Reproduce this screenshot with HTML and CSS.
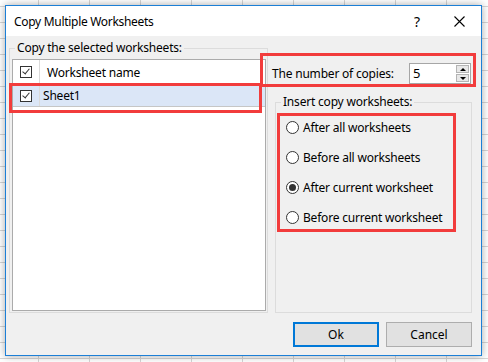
FILE: index.html
```html
<!DOCTYPE html>
<html lang="en">
<head>
  <meta charset="UTF-8" />
  <title>Copy Multiple Worksheets</title>
  <link rel="stylesheet" href="styles.css">
</head>
<body>

  <!-- Dialog -->
  <div class="dialog">
    <div class="titlebar">
      <span class="title">Copy Multiple Worksheets</span>
      <span class="help">?</span>
      <span class="close">
        <svg width="11" height="11" viewBox="0 0 11 11"><path d="M0.5 0.5L10.5 10.5M10.5 0.5L0.5 10.5" stroke="#000" stroke-width="1.1" fill="none"/></svg>
      </span>
    </div>

    <div class="main">
      <fieldset class="group group-sheets">
        <legend>Copy the selected worksheets:</legend>
        <div class="listbox">
          <div class="list-row list-head">
            <span class="cell-check"><span class="check"></span></span>
            <span class="cell-name head-name">Worksheet name</span>
          </div>
          <div class="list-row selected">
            <span class="cell-check"><span class="check"></span></span>
            <span class="cell-name">Sheet1</span>
          </div>
        </div>
      </fieldset>

      <div class="side">
        <div class="copies">
          <span>The number of copies:</span>
          <div class="spin">
            <span class="spin-value">5</span>
            <div class="spin-btns">
              <span class="spin-btn"><span class="tri-up"></span></span>
              <span class="spin-btn"><span class="tri-down"></span></span>
            </div>
          </div>
        </div>

        <fieldset class="group group-insert">
          <legend>Insert copy worksheets:</legend>
          <div class="options">
            <div class="option"><span class="radio"></span>After all worksheets</div>
            <div class="option"><span class="radio"></span>Before all worksheets</div>
            <div class="option"><span class="radio checked"></span>After current worksheet</div>
            <div class="option"><span class="radio"></span>Before current worksheet</div>
          </div>
        </fieldset>
      </div>
    </div>

    <div class="footer">
      <button class="btn btn-default">Ok</button>
      <button class="btn">Cancel</button>
    </div>

    <!-- highlight marks -->
    <div class="mark mark-sheet"></div>
    <div class="mark mark-copies"></div>
    <div class="mark mark-options"></div>
  </div>

</body>
</html>
```

FILE: styles.css
```css
body {
  margin: 0;
  width: 488px;
  height: 362px;
  overflow: hidden;
  font-family: "Noto Sans", "Open Sans", sans-serif;
  font-size: 12px;
  letter-spacing: -0.2px;
  color: #000;
  background-color: #fff;
  background-image:
    linear-gradient(to right, #d6d6d6 1px, transparent 1px),
    linear-gradient(to bottom, #d6d6d6 1px, transparent 1px);
  background-size: 51px 16px;
  background-position: 38px 6px;
}

.dialog {
  position: relative;
  box-sizing: border-box;
  width: 477px;
  height: 351px;
  margin: 5px;
  border: 1px solid #1c7fd6;
  background: #f0f0f0;
  box-shadow: 0 0 8px rgba(0,0,0,0.35);
}

.titlebar {
  display: flex;
  align-items: center;
  height: 30px;
  padding-left: 8px;
  background: #fff;
}

.title {
  flex: 1;
  letter-spacing: -0.3px;
}

.help {
  width: 40px;
  font-size: 14px;
}

.close {
  display: flex;
  width: 27px;
}

.main {
  display: flex;
  gap: 7px;
  height: 273px;
  padding: 4px 9px 0 3px;
}

.group {
  margin: 0;
  padding: 0;
  border: 1px solid #dcdcdc;
  min-width: 0;
}

.group legend {
  padding: 0 2px;
  margin-left: 5px;
  line-height: 16px;
}

.group-sheets {
  width: 259px;
  box-sizing: border-box;
}

.listbox {
  height: 252px;
  box-sizing: border-box;
  margin: 3px 1px 1px 2px;
  border: 1px solid #ababab;
  background: #fff;
}

.list-row {
  display: flex;
  align-items: center;
}

.list-head {
  height: 24px;
  border-bottom: 1px solid #e5e5e5;
}

.selected {
  height: 21px;
  background: #dbe6f7;
  border-bottom: 1px solid #c6c6c6;
}

.cell-check {
  display: flex;
  justify-content: center;
  align-items: center;
  width: 26px;
  height: 100%;
  border-right: 1px solid #dadada;
}

.check {
  position: relative;
  width: 10px;
  height: 10px;
  border: 1px solid #333;
  background: #fff;
}

.check::after {
  content: "";
  position: absolute;
  left: 3px;
  top: 0px;
  width: 3px;
  height: 6px;
  border-right: 1px solid #333;
  border-bottom: 1px solid #333;
  transform: rotate(40deg);
}

.cell-name {
  padding-left: 3px;
}

.head-name {
  padding-left: 7px;
}

.side {
  display: flex;
  flex-direction: column;
  width: 197px;
}

.copies {
  display: flex;
  align-items: center;
  justify-content: space-between;
  height: 21px;
  margin: 23px 1px 0 -3px;
}

.spin {
  display: flex;
  box-sizing: border-box;
  width: 62px;
  height: 21px;
  border: 1px solid #a6a6a6;
  background: #fff;
}

.spin-value {
  flex: 1;
  padding-left: 3px;
  font-size: 13px;
  line-height: 19px;
}

.spin-btns {
  display: flex;
  flex-direction: column;
  gap: 1px;
  width: 13px;
  padding: 1px 1px 1px 0;
}

.spin-btn {
  display: flex;
  justify-content: center;
  align-items: center;
  flex: 1;
  border: 1px solid #b4b4b4;
  background: #e8e8e8;
}

.tri-up,
.tri-down {
  width: 0;
  height: 0;
  border-left: 3px solid transparent;
  border-right: 3px solid transparent;
}

.tri-up {
  border-bottom: 3px solid #000;
}

.tri-down {
  border-top: 3px solid #000;
}

.group-insert {
  flex: 1;
  margin-top: 10px;
}

.options {
  padding: 2px 0 0 10px;
}

.option {
  display: flex;
  align-items: center;
  height: 30px;
}

.radio {
  display: flex;
  justify-content: center;
  align-items: center;
  box-sizing: border-box;
  width: 13px;
  height: 13px;
  margin-right: 4px;
  border: 1px solid #333;
  border-radius: 50%;
  background: #fff;
}

.radio.checked::after {
  content: "";
  width: 7px;
  height: 7px;
  border-radius: 50%;
  background: #333;
}

.footer {
  display: flex;
  justify-content: flex-end;
  gap: 7px;
  padding: 9px 9px 0 0;
}

.btn {
  box-sizing: border-box;
  width: 86px;
  height: 25px;
  padding: 0;
  font-family: inherit;
  font-size: 12px;
  color: #000;
  background: #e1e1e1;
  border: 1px solid #adadad;
}

.btn-default {
  border: 2px solid #0078d7;
}

.mark {
  position: absolute;
  box-sizing: border-box;
  border: 3px solid #f23c3c;
}

.mark-sheet {
  left: 3px;
  top: 77px;
  width: 253px;
  height: 30px;
}

.mark-copies {
  left: 254px;
  top: 47px;
  width: 216px;
  height: 34px;
}

.mark-options {
  left: 271px;
  top: 107px;
  width: 179px;
  height: 119px;
}
```
